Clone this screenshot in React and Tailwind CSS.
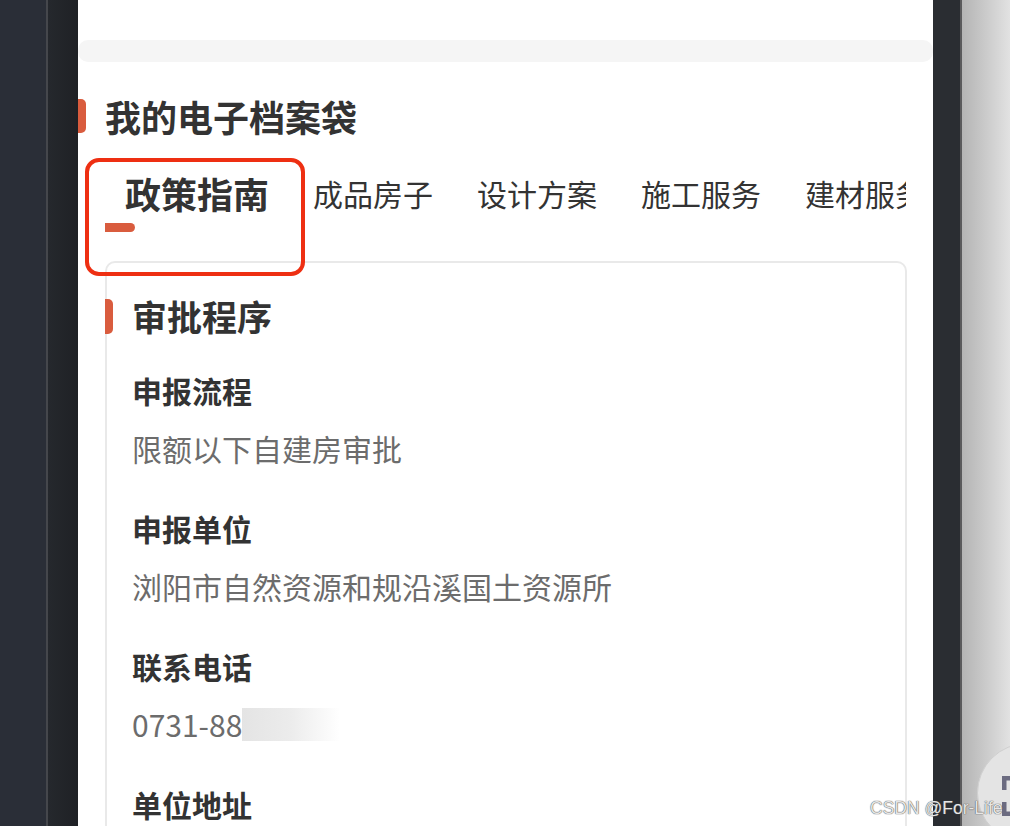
import React from "react";

const font = { fontFamily: '"PingFang SC", "Noto Sans CJK SC", "Noto Sans", sans-serif' };

const tabs = ["政策指南", "成品房子", "设计方案", "施工服务", "建材服务"];

const items = [
  { label: "申报流程", value: "限额以下自建房审批" },
  { label: "申报单位", value: "浏阳市自然资源和规沿溪国土资源所" },
  { label: "联系电话", value: "0731-88", masked: true },
  { label: "单位地址", value: "" },
];

function InfoRow({ label, value, masked, first }) {
  return (
    <div className={first ? "mt-[34px]" : "mt-[40px]"}>
      <div className="text-[30px] leading-[40px] font-semibold text-[#333]">{label}</div>
      {value && (
        <div className="mt-[18px] text-[30px] leading-[40px] text-[#6c6c6c] flex items-center">
          <span>{value}</span>
          {masked && (
            <span className="inline-block w-[98px] h-[33px] bg-gradient-to-r from-[#e4e4e4] via-[#ececec] to-white" />
          )}
        </div>
      )}
    </div>
  );
}

export default function App() {
  return (
    <div className="relative w-[1010px] h-[826px] flex overflow-hidden bg-white" style={font}>
      {/* left editor chrome */}
      <div className="w-[46px] shrink-0 bg-[#2a2e37]" />
      <div className="w-[2px] shrink-0 bg-[#45474c]" />
      <div className="w-[30px] shrink-0 bg-gradient-to-r from-[#25282d] to-[#1f2125]" />

      {/* phone screen */}
      <div className="w-[855px] shrink-0 h-[826px] overflow-hidden flex flex-col bg-white">
        <div className="h-[40px] shrink-0 bg-white" />
        <div className="h-[22px] shrink-0 rounded-[10px] bg-[#f5f5f5]" />

        <div className="shrink-0 pt-[34px]">
          <div className="flex items-center h-[40px]">
            <div className="w-[8px] h-[34px] rounded-r-[5px] bg-[#d95c3e]" />
            <h2 className="ml-[19px] text-[36px] leading-[40px] font-semibold text-[#333]">我的电子档案袋</h2>
          </div>

          <div className="mt-[37px] mx-[27px] w-[801px] overflow-x-clip">
            <div className="flex items-start gap-[44px] whitespace-nowrap">
              {tabs.map((t, i) =>
                i === 0 ? (
                  <div key={t} className="shrink-0 flex flex-col pl-[20px]">
                    <span className="text-[36px] leading-[40px] font-bold text-[#333]">{t}</span>
                    <span className="-ml-[20px] mt-[10px] w-[30px] h-[9px] rounded-r-[5px] bg-[#d95c3e]" />
                  </div>
                ) : (
                  <span key={t} className="shrink-0 text-[30px] leading-[40px] text-[#333]">{t}</span>
                )
              )}
            </div>
          </div>

          <div className="mt-[29px] mx-[27px] w-[802px] h-[600px] border-2 border-[#e9e9e9] rounded-t-[10px] pt-[33px]">
            <div className="flex items-center h-[40px] -ml-[2px]">
              <div className="w-[8px] h-[35px] rounded-r-[5px] bg-[#d95c3e]" />
              <h3 className="ml-[19px] text-[35px] leading-[40px] font-bold text-[#333]">审批程序</h3>
            </div>
            <div className="pl-[25px]">
              {items.map((it, i) => (
                <InfoRow key={it.label} {...it} first={i === 0} />
              ))}
            </div>
          </div>
        </div>
      </div>

      {/* right chrome */}
      <div className="w-[27px] shrink-0 bg-[#2a2d32]" />
      <div className="w-[2px] shrink-0 bg-[#5a5a5c]" />
      <div className="flex-1 bg-gradient-to-r from-[#b4b4b4] to-[#e2e2e2]" />

      {/* circular floating button, partly off screen */}
      <div className="absolute left-[977px] top-[743px] w-[100px] h-[100px] rounded-full border border-[#cfcfcf] bg-[#e4e4e4]">
        <svg className="absolute left-[24px] top-[32px]" width="40" height="40" viewBox="0 0 40 40" fill="none" stroke="#6b6b80" strokeWidth="5">
          <path d="M2 14V2h12M2 26v12h12" />
        </svg>
      </div>

      {/* annotation box */}
      <div className="absolute left-[85px] top-[158px] w-[220px] h-[118px] rounded-[14px] border-[4px] border-[#ee2f12]" />

      {/* watermark */}
      <div
        className="absolute left-[870px] top-[796px] text-[17.5px] leading-[24px] text-[#e6e6e6] [text-shadow:0_0_1px_#555,0_0_1px_#555]"
        style={{ fontFamily: '"Liberation Sans", Arial, sans-serif' }}
      >
        CSDN @For-Life
      </div>
    </div>
  );
}
